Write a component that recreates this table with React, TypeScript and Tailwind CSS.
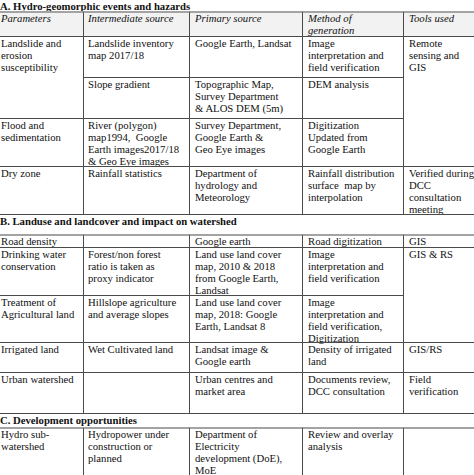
import React from "react";

type CellProps = {
  lines?: string[];
  col: 1 | 2 | 3 | 4 | 5;
  rs?: 2 | 3;
  thick?: boolean;
  head?: boolean;
  pre?: boolean;
};

const padByCol: Record<number, string> = {
  1: "pl-px border-l-0",
  2: "pl-1 border-l",
  3: "pl-[5px] border-l",
  4: "pl-[5px] border-l",
  5: "pl-[5px] border-l",
};

function Cell({ lines = [], col, rs, thick, head, pre }: CellProps) {
  const span = rs === 2 ? "row-span-2" : rs === 3 ? "row-span-3" : "";
  const top = thick ? "border-t-2 border-t-[#a3a3a3]" : "border-t border-t-[#4a4a4a]";
  return (
    <div
      className={`${padByCol[col]} border-l-[#4a4a4a] ${top} ${span} ${head ? "bg-[#f2f2f2] italic" : ""} ${pre ? "whitespace-pre" : "whitespace-nowrap"} min-w-0`}
    >
      <div className={thick ? "-mt-px" : ""}>
        {lines.map((l, i) => (
          <div key={i}>{l}</div>
        ))}
      </div>
    </div>
  );
}

function Heading({ text, border }: { text: string; border?: boolean }) {
  return (
    <div className={`col-span-5 font-bold whitespace-nowrap ${border ? "border-t border-t-[#4a4a4a]" : ""}`}>
      {text}
    </div>
  );
}

export default function App() {
  return (
    <div
      className="w-[474px] h-[475px] overflow-hidden bg-white text-[#111111] text-[10.7px] leading-[12px]"
      style={{ fontFamily: '"Liberation Serif", "Times New Roman", serif' }}
    >
      <div className="grid w-[493px] grid-cols-[83px_106px_113px_101px_90px] grid-rows-[11px_25px_41px_41px_48px_48px_20px_13px_48px_47px_30px_41px_14px_60px]">
        <Heading text="A. Hydro-geomorphic events and hazards" />

        <Cell col={1} head thick lines={["Parameters"]} />
        <Cell col={2} head thick lines={["Intermediate source"]} />
        <Cell col={3} head thick lines={["Primary source"]} />
        <Cell col={4} head thick lines={["Method of", "generation"]} />
        <Cell col={5} head thick lines={["Tools used"]} />

        <Cell col={1} rs={2} lines={["Landslide and", "erosion", "susceptibility"]} />
        <Cell col={2} lines={["Landslide inventory", "map 2017/18"]} />
        <Cell col={3} lines={["Google Earth, Landsat"]} />
        <Cell col={4} lines={["Image", "interpretation and", "field verification"]} />
        <Cell col={5} rs={3} lines={["Remote", "sensing and", "GIS"]} />

        <Cell col={2} lines={["Slope gradient"]} />
        <Cell col={3} lines={["Topographic Map,", "Survey Department", "& ALOS DEM (5m)"]} />
        <Cell col={4} lines={["DEM analysis"]} />

        <Cell col={1} lines={["Flood and", "sedimentation"]} />
        <Cell col={2} pre lines={["River (polygon)", "map1994,  Google", "Earth images2017/18", "& Geo Eye images"]} />
        <Cell col={3} lines={["Survey Department,", "Google Earth &", "Geo Eye images"]} />
        <Cell col={4} lines={["Digitization", "Updated from", "Google Earth"]} />

        <Cell col={1} lines={["Dry zone"]} />
        <Cell col={2} lines={["Rainfall statistics"]} />
        <Cell col={3} lines={["Department of", "hydrology and", "Meteorology"]} />
        <Cell col={4} pre lines={["Rainfall distribution", "surface  map by", "interpolation"]} />
        <Cell col={5} lines={["Verified during", "DCC", "consultation", "meeting"]} />

        <Heading text="B. Landuse and landcover and impact on watershed" border />

        <Cell col={1} thick lines={["Road density"]} />
        <Cell col={2} thick />
        <Cell col={3} thick lines={["Google earth"]} />
        <Cell col={4} thick lines={["Road digitization"]} />
        <Cell col={5} thick lines={["GIS"]} />

        <Cell col={1} lines={["Drinking water", "conservation"]} />
        <Cell col={2} lines={["Forest/non forest", "ratio is taken as", "proxy indicator"]} />
        <Cell col={3} lines={["Land use land cover", "map, 2010 & 2018", "from Google Earth,", "Landsat"]} />
        <Cell col={4} lines={["Image", "interpretation and", "field verification"]} />
        <Cell col={5} rs={2} lines={["GIS & RS"]} />

        <Cell col={1} lines={["Treatment of", "Agricultural land"]} />
        <Cell col={2} lines={["Hillslope agriculture", "and average slopes"]} />
        <Cell col={3} lines={["Land use land cover", "map, 2018: Google", "Earth, Landsat 8"]} />
        <Cell col={4} lines={["Image", "interpretation and", "field verification,", "Digitization"]} />

        <Cell col={1} lines={["Irrigated land"]} />
        <Cell col={2} lines={["Wet Cultivated land"]} />
        <Cell col={3} lines={["Landsat image &", "Google earth"]} />
        <Cell col={4} lines={["Density of irrigated", "land"]} />
        <Cell col={5} lines={["GIS/RS"]} />

        <Cell col={1} lines={["Urban watershed"]} />
        <Cell col={2} />
        <Cell col={3} lines={["Urban centres and", "market area"]} />
        <Cell col={4} lines={["Documents review,", "DCC consultation"]} />
        <Cell col={5} lines={["Field", "verification"]} />

        <Heading text="C. Development opportunities" border />

        <Cell col={1} thick lines={["Hydro sub-", "watershed"]} />
        <Cell col={2} thick lines={["Hydropower under", "construction or", "planned"]} />
        <Cell col={3} thick lines={["Department of", "Electricity", "development (DoE),", "MoE"]} />
        <Cell col={4} thick lines={["Review and overlay", "analysis"]} />
        <Cell col={5} thick />
      </div>
    </div>
  );
}
